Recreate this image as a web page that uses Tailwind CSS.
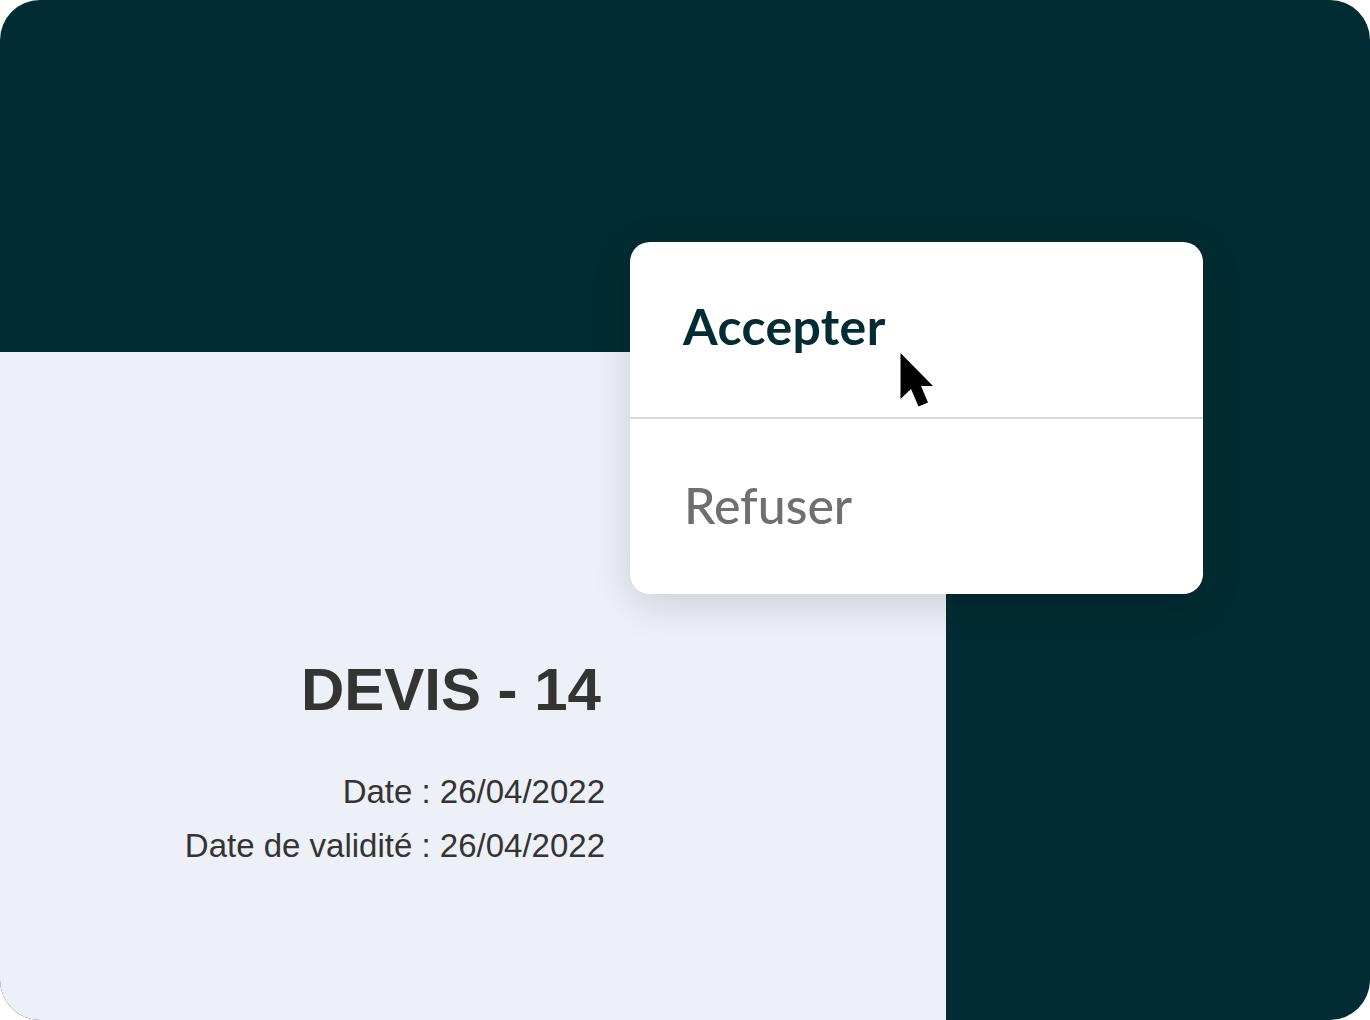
<!DOCTYPE html>
<html lang="fr">
<head>
<meta charset="utf-8">
<script src="https://cdn.jsdelivr.net/npm/@tailwindcss/browser@4"></script>
</head>
<body class="bg-white m-0">
<div class="relative w-[1370px] h-[1020px] overflow-hidden rounded-[40px] bg-[#022c33] flex flex-col justify-end font-['Liberation_Sans',sans-serif]">
  <section class="w-[946px] h-[668px] bg-[#edf0f7] flex flex-col items-end pr-[341px] pt-[304px] text-[#343434]">
    <h1 class="text-[60px] leading-[68px] font-bold pr-[4px]">DEVIS - 14</h1>
    <p class="text-[33px] leading-[54px] mt-[41px] text-right">Date : 26/04/2022<br>Date de validité : 26/04/2022</p>
  </section>
  <div class="absolute left-[630px] top-[242px] w-[573px] h-[352px] bg-white rounded-[20px] shadow-[0_10px_40px_rgba(0,0,0,0.14)] flex flex-col font-['Lato',sans-serif] text-[50px] leading-[60px]">
    <div class="h-[177px] flex items-center pl-[53px] pb-[8px] font-bold tracking-[0.35px] text-[#022c33] border-b-2 border-[#d9d9d9]">Accepter</div>
    <div class="flex-1 flex items-center pl-[54px] pb-[4px] font-medium text-[#6f6f6f]">Refuser</div>
    <svg class="absolute left-[270px] top-[111px]" width="34" height="54" viewBox="0 0 34 54" aria-hidden="true"><path d="M0.5 0 L33 33 L21 33 L28 49.5 L18.5 53.5 L11 36 L0.5 46 Z" fill="#000"/></svg>
  </div>
</div>
</body>
</html>
